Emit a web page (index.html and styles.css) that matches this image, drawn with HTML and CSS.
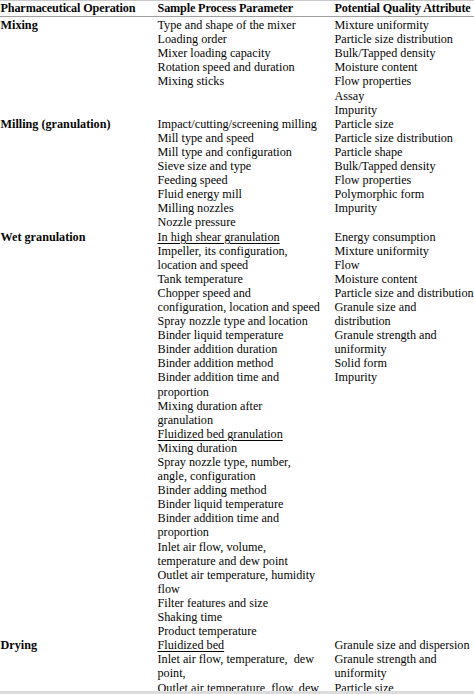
FILE: index.html
```html
<!DOCTYPE html>
<html>
<head>
<meta charset="utf-8">
<link rel="stylesheet" href="styles.css">
</head>
<body>
<div class="table">
  <div class="row head">
    <div class="c1">Pharmaceutical Operation</div>
    <div class="c2">Sample Process Parameter</div>
    <div class="c3">Potential Quality Attribute</div>
  </div>
  <div class="row">
    <div class="c1 op">Mixing</div>
    <div class="c2">Type and shape of the mixer<br>Loading order<br>Mixer loading capacity<br>Rotation speed and duration<br>Mixing sticks</div>
    <div class="c3">Mixture uniformity<br>Particle size distribution<br>Bulk/Tapped density<br>Moisture content<br>Flow properties<br>Assay<br>Impurity</div>
  </div>
  <div class="row">
    <div class="c1 op">Milling (granulation)</div>
    <div class="c2">Impact/cutting/screening milling<br>Mill type and speed<br>Mill type and configuration<br>Sieve size and type<br>Feeding speed<br>Fluid energy mill<br>Milling nozzles<br>Nozzle pressure</div>
    <div class="c3">Particle size<br>Particle size distribution<br>Particle shape<br>Bulk/Tapped density<br>Flow properties<br>Polymorphic form<br>Impurity</div>
  </div>
  <div class="row">
    <div class="c1 op">Wet granulation</div>
    <div class="c2"><span class="u">In high shear granulation</span><br>Impeller, its configuration,<br>location and speed<br>Tank temperature<br>Chopper speed and<br>configuration, location and speed<br>Spray nozzle type and location<br>Binder liquid temperature<br>Binder addition duration<br>Binder addition method<br>Binder addition time and<br>proportion<br>Mixing duration after<br>granulation<br><span class="u">Fluidized bed granulation</span><br>Mixing duration<br>Spray nozzle type, number,<br>angle, configuration<br>Binder adding method<br>Binder liquid temperature<br>Binder addition time and<br>proportion<br>Inlet air flow, volume,<br>temperature and dew point<br>Outlet air temperature, humidity<br>flow<br>Filter features and size<br>Shaking time<br>Product temperature</div>
    <div class="c3">Energy consumption<br>Mixture uniformity<br>Flow<br>Moisture content<br>Particle size and distribution<br>Granule size and<br>distribution<br>Granule strength and<br>uniformity<br>Solid form<br>Impurity</div>
  </div>
  <div class="row">
    <div class="c1 op">Drying</div>
    <div class="c2"><span class="u">Fluidized bed</span><br>Inlet air flow, temperature,&nbsp; dew<br>point,<br>Outlet air temperature, flow, dew</div>
    <div class="c3">Granule size and dispersion<br>Granule strength and<br>uniformity<br>Particle size</div>
  </div>
</div>
<div class="bottom-bar"></div>
</body>
</html>
```
FILE: styles.css
```css
html, body {
  margin: 0;
  padding: 0;
  background: #ffffff;
  overflow: hidden;
}
body {
  width: 474px;
  height: 694px;
  font-family: "Liberation Serif", "Times New Roman", serif;
  font-size: 12.2px;
  line-height: 14.09px;
  color: #050505;
}
.table {
  border-top: 1px solid #c8c8c8;
}
.row {
  display: grid;
  grid-template-columns: 157px 177px 140px;
  white-space: nowrap;
}
.row > div {
  padding-left: 0.5px;
}
.head {
  font-weight: bold;
  letter-spacing: -0.15px;
  padding-bottom: 1px;
  border-bottom: 1px solid #a0a0a0;
  margin-bottom: 1px;
}
.op {
  font-weight: bold;
}
.u {
  text-decoration: underline;
  text-decoration-thickness: 1px;
  text-underline-offset: 2px;
}
.bottom-bar {
  position: fixed;
  left: 0;
  right: 0;
  bottom: 0;
  height: 3px;
  background: #dcdcdc;
}
```
